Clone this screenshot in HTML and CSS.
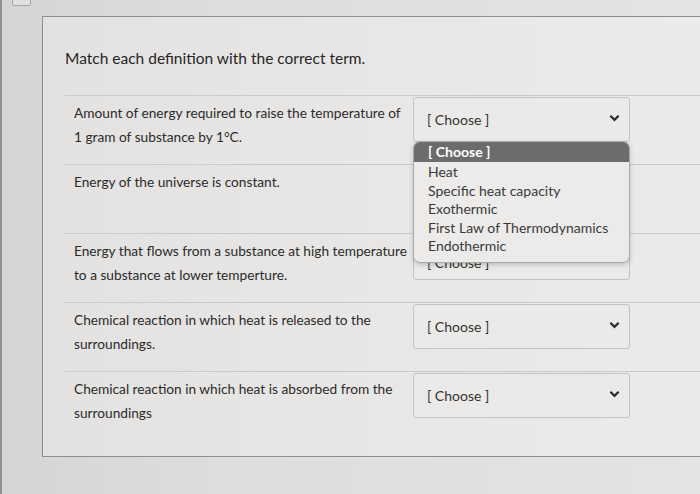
FILE: index.html
```html
<!DOCTYPE html>
<html>
<head>
<meta charset="utf-8">
<link rel="stylesheet" href="styles.css">
</head>
<body>
<div class="corner"></div>
<div class="card">
  <h1 class="heading">Match each definition with the correct term.</h1>
  <div class="rows">
    <div class="row">
      <div class="def">Amount of energy required to raise the temperature of 1 gram of substance by 1°C.</div>
      <div class="select"><span>[ Choose ]</span><svg class="chev" viewBox="0 0 12 8" width="11" height="8"><path d="M1.5 1.5 L6 6 L10.5 1.5" fill="none" stroke="#2a2a2a" stroke-width="2.4"/></svg></div>
    </div>
    <div class="row">
      <div class="def">Energy of the universe is constant.</div>
      <div class="select covered"><span>[ Choose ]</span><svg class="chev" viewBox="0 0 12 8" width="11" height="8"><path d="M1.5 1.5 L6 6 L10.5 1.5" fill="none" stroke="#2a2a2a" stroke-width="2.4"/></svg></div>
    </div>
    <div class="row">
      <div class="def">Energy that flows from a substance at high temperature to a substance at lower temperture.</div>
      <div class="select"><span class="low">[ Choose ]</span><svg class="chev" viewBox="0 0 12 8" width="11" height="8"><path d="M1.5 1.5 L6 6 L10.5 1.5" fill="none" stroke="#2a2a2a" stroke-width="2.4"/></svg></div>
    </div>
    <div class="row">
      <div class="def">Chemical reaction in which heat is released to the surroundings.</div>
      <div class="select"><span>[ Choose ]</span><svg class="chev" viewBox="0 0 12 8" width="11" height="8"><path d="M1.5 1.5 L6 6 L10.5 1.5" fill="none" stroke="#2a2a2a" stroke-width="2.4"/></svg></div>
    </div>
    <div class="row">
      <div class="def">Chemical reaction in which heat is absorbed from the surroundings</div>
      <div class="select"><span>[ Choose ]</span><svg class="chev" viewBox="0 0 12 8" width="11" height="8"><path d="M1.5 1.5 L6 6 L10.5 1.5" fill="none" stroke="#2a2a2a" stroke-width="2.4"/></svg></div>
    </div>
  </div>
</div>
<ul class="dropdown">
  <li class="active">[ Choose ]</li>
  <li>Heat</li>
  <li>Specific heat capacity</li>
  <li>Exothermic</li>
  <li>First Law of Thermodynamics</li>
  <li>Endothermic</li>
</ul>
</body>
</html>
```
FILE: styles.css
```css
html, body {
  margin: 0;
  padding: 0;
}
body {
  width: 700px;
  height: 494px;
  overflow: hidden;
  position: relative;
  background: linear-gradient(90deg, #d6d5d3 0%, #dedddb 30%, #e4e4e2 100%);
  font-family: Lato, "Open Sans", sans-serif;
  color: #2e2e2e;
  border-left: 2px solid #8f8f8f;
  box-sizing: border-box;
}
.corner {
  position: absolute;
  left: 10px;
  top: -4px;
  width: 17px;
  height: 8px;
  border: 1px solid #a5a5a5;
  border-radius: 2px;
  background: #e2e1df;
}
.card {
  margin-left: 40px;
  margin-top: 16px;
  height: 441px;
  border: 1px solid #8e8e8e;
  border-right: none;
  background: linear-gradient(90deg, #e3e2e0 0%, #e8e7e5 50%, #ecebe9 100%);
  padding-left: 22px;
  box-sizing: border-box;
}
.heading {
  margin: 31px 0 0 0;
  font-size: 15.5px;
  font-weight: 400;
  line-height: 20px;
  color: #262626;
}
.rows {
  margin-top: 27px;
}
.row {
  display: flex;
  height: 68px;
  border-top: 1px solid #cbcac8;
}
.def {
  width: 337px;
  flex: none;
  padding: 5px 0 0 9px;
  font-size: 13.7px;
  line-height: 24px;
  color: #2b2b2b;
}
.select {
  margin-left: 2px;
  margin-top: 1px;
  width: 217px;
  height: 45px;
  flex: none;
  box-sizing: border-box;
  border: 1px solid #c3c3c1;
  border-radius: 3px;
  background: #ebeae8;
  display: flex;
  align-items: center;
  justify-content: space-between;
  padding: 0 9px 0 13px;
  font-size: 14px;
  color: #333;
}
.select.covered span {
  visibility: hidden;
}
.select .low {
  margin-top: 10px;
}
.chev {
  margin-top: -4px;
}
.dropdown {
  position: absolute;
  left: 411px;
  top: 141px;
  width: 217px;
  margin: 0;
  padding: 0 0 6px 0;
  list-style: none;
  box-sizing: border-box;
  background: #ecebe9;
  border: 1px solid #a9a9a9;
  border-radius: 7px;
  box-shadow: 0 2px 5px rgba(0,0,0,0.18);
  overflow: hidden;
  font-size: 14px;
  line-height: 18.5px;
  color: #3a3a3a;
}
.dropdown li {
  padding-left: 14px;
}
.dropdown li.active {
  background: #6c6c6c;
  color: #fff;
  font-weight: 700;
  line-height: 20px;
  margin-bottom: 1px;
}
```
